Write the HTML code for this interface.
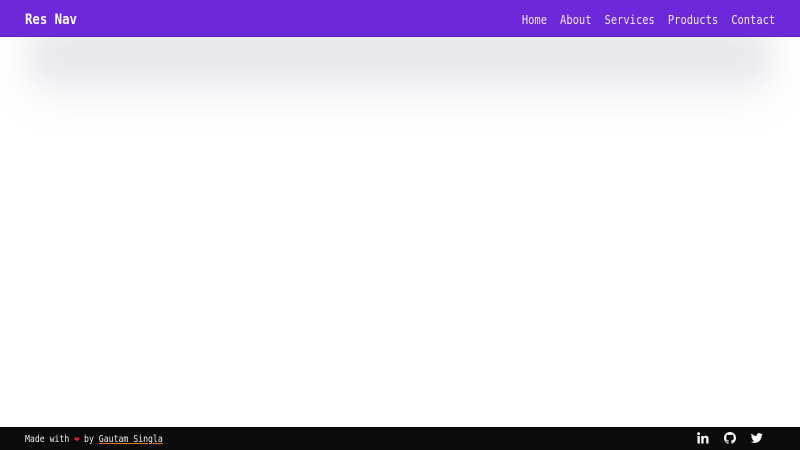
<!DOCTYPE html>
<html><head><style>
*{margin:0;padding:0;box-sizing:border-box}
body{width:800px;height:450px;background:#fff;font-family:"DejaVu Sans Mono","Liberation Mono",monospace;position:relative;overflow:hidden}
header{position:absolute;top:0;left:0;width:800px;height:37px;background:#6d28d9;border-bottom:1px solid #5b21b6;z-index:2}
.logo{position:absolute;left:25px;top:12px;color:#fff;font-weight:bold;font-size:14px;transform:scaleX(0.88);transform-origin:left}
nav{position:absolute;right:25px;top:13px;font-size:12px;color:#f1eaff;transform:scaleX(0.87);transform-origin:right;white-space:nowrap}
nav span{margin-left:15px}
.sh{position:absolute;top:30px;left:30px;width:740px;height:80px;background:linear-gradient(#dcdce4 0%,#e4e4ea 35%,rgba(245,245,248,0) 100%);filter:blur(18px)}
footer{position:absolute;bottom:0;left:0;width:800px;height:23px;background:#0b0b0b;color:#eee;font-size:9.5px}
.m{position:absolute;left:25px;top:7px;transform:scaleX(0.86);transform-origin:left;white-space:nowrap}
.m u{text-decoration-color:#e07a2a}
.ic{position:absolute;top:5px;color:#fff}
</style></head><body>
<div class="sh"></div>
<header><div class="logo">Res Nav</div>
<nav><span>Home</span><span>About</span><span>Services</span><span>Products</span><span>Contact</span></nav></header>
<footer><div class="m">Made with <span style="color:#e11d48">❤</span> by <u>Gautam Singla</u></div>
<svg class="ic" style="left:697px" width="12" height="12" viewBox="0 0 12 12" fill="#fff"><rect x="0.5" y="4" width="2.3" height="7.5"/><circle cx="1.6" cy="1.6" r="1.4"/><path d="M4.3 4h2.2v1.1C7 4.2 8 3.8 9 3.8c2 0 2.5 1.3 2.5 3v4.7H9.2V7.3c0-.9-.2-1.6-1.1-1.6-1 0-1.5.7-1.5 1.7v4.1H4.3z"/></svg>
<svg class="ic" style="left:724px" width="12" height="12" viewBox="0 0 16 16" fill="#fff"><path d="M8 0C3.6 0 0 3.6 0 8c0 3.5 2.3 6.5 5.5 7.6.4.1.5-.2.5-.4v-1.4c-2.2.5-2.7-1-2.7-1-.4-.9-.9-1.2-.9-1.2-.7-.5.1-.5.1-.5.8.1 1.2.8 1.2.8.7 1.2 1.9.9 2.3.7.1-.5.3-.9.5-1.1-1.8-.2-3.6-.9-3.6-4 0-.9.3-1.6.8-2.1-.1-.2-.4-1 .1-2.1 0 0 .7-.2 2.2.8.6-.2 1.3-.3 2-.3s1.4.1 2 .3c1.5-1 2.2-.8 2.2-.8.4 1.1.2 1.9.1 2.1.5.6.8 1.3.8 2.1 0 3.1-1.9 3.7-3.6 3.9.3.3.5.8.5 1.5v2.2c0 .2.1.5.6.4C13.7 14.5 16 11.5 16 8c0-4.4-3.6-8-8-8z"/></svg>
<svg class="ic" style="left:751px" width="12" height="12" viewBox="0 0 24 24" fill="#fff"><path d="M23.6 4.6c-.9.4-1.8.6-2.8.8 1-.6 1.8-1.6 2.1-2.7-.9.6-2 1-3.1 1.2-.9-1-2.2-1.6-3.6-1.6-2.7 0-4.9 2.2-4.9 4.9 0 .4 0 .8.1 1.1C7.4 8.1 3.7 6.1 1.3 3.1c-.4.7-.7 1.6-.7 2.5 0 1.7.9 3.2 2.2 4.1-.8 0-1.6-.2-2.2-.6v.1c0 2.4 1.7 4.4 3.9 4.8-.4.1-.8.2-1.3.2-.3 0-.6 0-.9-.1.6 2 2.4 3.4 4.6 3.4-1.7 1.3-3.8 2.1-6.1 2.1-.4 0-.8 0-1.2-.1 2.2 1.4 4.8 2.2 7.5 2.2 9.1 0 14-7.5 14-14v-.6c1-.7 1.8-1.6 2.5-2.5z"/></svg>
</footer>
</body></html>
